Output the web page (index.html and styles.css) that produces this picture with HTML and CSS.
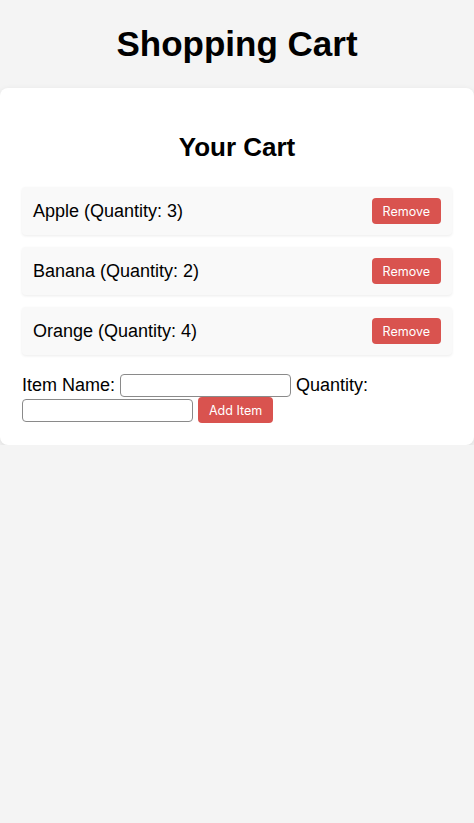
FILE: index.html
```html
<!DOCTYPE html>
<html lang="en">

<head>
    <meta charset="UTF-8">
    <meta name="viewport" content="width=device-width, initial-scale=1.0">
    <title>Shopping Cart</title>
    <link rel="stylesheet" href="styles.css">
</head>

<body>
    <header class="page-header">
        <h1>Shopping Cart</h1>
    </header>

    <section class="cart">
        <h2>Your Cart</h2>
        <ul class="cart-list">
            <li class="cart-item">
                <span>Apple (Quantity: 3)</span>
                <button class="btn">Remove</button>
            </li>
            <li class="cart-item">
                <span>Banana (Quantity: 2)</span>
                <button class="btn">Remove</button>
            </li>
            <li class="cart-item">
                <span>Orange (Quantity: 4)</span>
                <button class="btn">Remove</button>
            </li>
        </ul>

        <form class="add-form">
            <label for="item-name">Item Name:</label>
            <input type="text" id="item-name">
            <label for="item-qty">Quantity:</label>
            <input type="text" id="item-qty">
            <button type="button" class="btn btn-add">Add Item</button>
        </form>
    </section>
</body>

</html>
```

FILE: styles.css
```css
* {
    margin: 0;
    padding: 0;
    box-sizing: border-box;
}

body {
    background-color: #f4f4f4;
    font-family: "Liberation Sans", Arial, sans-serif;
    color: #000;
}

.page-header {
    height: 88px;
    display: flex;
    align-items: center;
    justify-content: center;
}

.page-header h1 {
    font-size: 35px;
    line-height: 40px;
    font-weight: bold;
}

.cart {
    background-color: #fff;
    border-radius: 8px;
    box-shadow: 0 2px 6px rgba(0, 0, 0, 0.1);
    padding: 22px;
}

.cart h2 {
    text-align: center;
    font-size: 26px;
    line-height: 30px;
    margin: 22px 0 25px;
}

.cart-list {
    list-style: none;
}

.cart-item {
    display: flex;
    align-items: center;
    justify-content: space-between;
    height: 48px;
    padding: 0 11px;
    margin-bottom: 12px;
    background-color: #f9f9f9;
    border-radius: 4px;
    box-shadow: 0 1px 3px rgba(0, 0, 0, 0.08);
    font-size: 18px;
}

.btn {
    height: 26px;
    padding: 0 11px;
    border: none;
    border-radius: 4px;
    background-color: #d9534f;
    color: #fff;
    font-family: Inter, "Noto Sans", sans-serif;
    font-size: 12.5px;
    cursor: pointer;
}

.add-form {
    display: flex;
    flex-wrap: wrap;
    align-items: center;
    column-gap: 5px;
    margin-top: 19px;
    font-size: 18px;
}

.add-form input {
    width: 171px;
    height: 23px;
    border: 1px solid #8a8a8a;
    border-radius: 4px;
    background-color: #fff;
}

.btn-add {
    padding: 0 11px;
}
```
